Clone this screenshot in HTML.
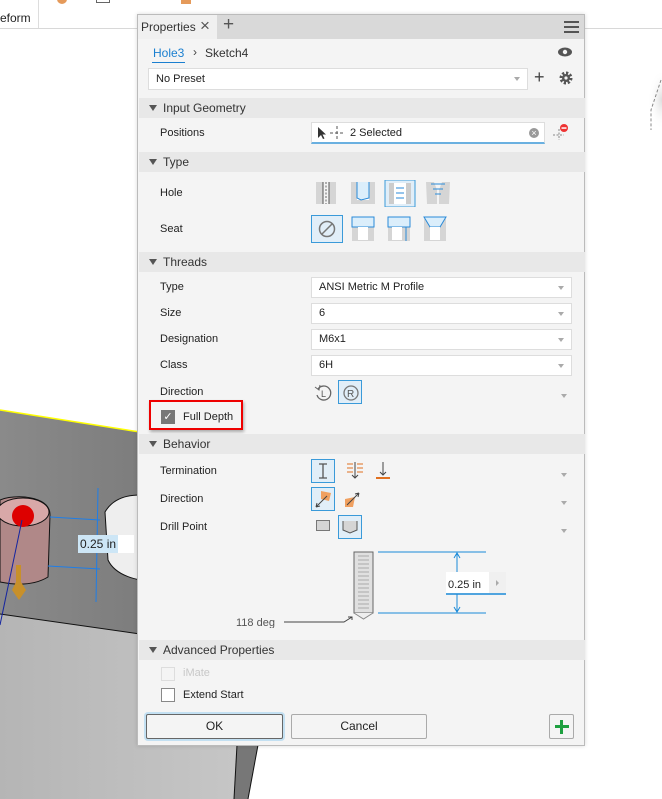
<!DOCTYPE html>
<html><head><meta charset="utf-8"><style>
*{margin:0;padding:0;box-sizing:border-box}
body{width:662px;height:799px;position:relative;overflow:hidden;background:#fff;font-family:"Liberation Sans",Tahoma,sans-serif;font-size:11px;color:#222}
.a{position:absolute}
.hdr{position:absolute;left:1px;width:446px;height:20px;background:#e8e8e8;font-size:12px;color:#333;padding-left:24px;line-height:20px}
.hdr:before{content:"";position:absolute;left:10px;top:7px;border-left:4px solid transparent;border-right:4px solid transparent;border-top:6px solid #555}
.lbl{position:absolute;left:22px;font-size:11px;color:#222}
.dd{position:absolute;left:173px;width:261px;height:21px;background:#fff;border:1px solid #ddd;padding-left:7px;line-height:19px;font-size:11px}
.dd:after,.arr:after{content:"";position:absolute;right:7px;top:8px;border-left:3.5px solid transparent;border-right:3.5px solid transparent;border-top:4px solid #aaa}
.arr{position:absolute;width:16px;height:16px}
.ib{position:absolute;width:24px;height:24px}
.sel{border:1px solid #3a9ad9;background:#e1eef8}
.cb{position:absolute;width:14px;height:14px;border:1px solid #888;background:#fff}
</style></head><body>
<div class="a" style="left:0;top:0;width:662px;height:29px;background:#fff;border-bottom:1px solid #d8d8d8"></div>
<div class="a" style="left:0;top:11px;font-size:12px">eform</div>
<div class="a" style="left:38px;top:0;width:1px;height:28px;background:#ddd"></div>
<div class="a" style="left:57px;top:-6px;width:10px;height:10px;border-radius:50%;background:#e59a5a"></div>
<div class="a" style="left:181px;top:-6px;width:10px;height:10px;background:#e59a5a"></div>
<div class="a" style="left:96px;top:-2px;width:14px;height:5px;border:1px solid #666"></div>
<svg class="a" style="left:0;top:0" width="662" height="799">
<defs><linearGradient id="g1" x1="0" x2="1"><stop offset="0" stop-color="#8a8a8a"/><stop offset="1" stop-color="#7d7d7d"/></linearGradient>
<linearGradient id="g2" x1="0" x2="1"><stop offset="0" stop-color="#b5b5b5"/><stop offset="1" stop-color="#c6c6c6"/></linearGradient>
<radialGradient id="g3"><stop offset="0" stop-color="#ddd"/><stop offset="1" stop-color="#fff" stop-opacity="0"/></radialGradient></defs>
<polygon points="0,410 140,432 140,634 0,614" fill="url(#g1)"/>
<line x1="0" y1="410" x2="140" y2="432" stroke="#ffff00" stroke-width="1.5"/>
<polygon points="0,614 140,634 140,746 237,746 234,799 0,799" fill="url(#g2)"/>
<line x1="0" y1="614" x2="140" y2="634" stroke="#111" stroke-width="1"/>
<polygon points="237,745 258,745 248,799 234,799" fill="#777"/>
<line x1="237" y1="745" x2="234" y2="799" stroke="#111"/><line x1="258" y1="745" x2="248" y2="799" stroke="#111"/>
<path d="M0,500 Q10,496 25,497 Q50,500 50,515 L48,577 Q30,588 0,582 Z" fill="#b08888" stroke="#111"/>
<ellipse cx="23" cy="512" rx="26" ry="14" fill="#d8a8a8" stroke="#111"/>
<circle cx="23" cy="516" r="11" fill="#d00"/>
<path d="M105,512 Q115,495 140,495 L140,580 Q115,575 108,560 Z" fill="#eee" stroke="#111"/>
<line x1="22" y1="520" x2="0" y2="625" stroke="#1525a0"/>
<line x1="50" y1="517" x2="100" y2="520" stroke="#1e7ee8"/><line x1="48" y1="566" x2="100" y2="569" stroke="#1e7ee8"/>
<line x1="98" y1="488" x2="96" y2="602" stroke="#1e7ee8"/>
<polygon points="16,565 21,565 21,582 26,590 19,600 12,590 16,582" fill="#c8902a"/>
<rect x="78" y="535" width="56" height="18" fill="#fff"/>
<rect x="78" y="535" width="40" height="18" fill="#cde6f6"/>
<text x="80" y="548" font-family="Liberation Sans" font-size="12" fill="#222">0.25 in</text>
<ellipse cx="662" cy="100" rx="14" ry="30" fill="url(#g3)"/>
<path d="M661,80 L655,98 L651,110 L651,130" stroke="#888" stroke-dasharray="3,2" fill="none"/>
</svg>
<div class="a" style="left:137px;top:14px;width:448px;height:732px;background:#f4f4f4;border:1px solid #bbb;box-shadow:0 0 4px rgba(0,0,0,.15)">
<div class="a" style="left:0;top:0;width:446px;height:24px;background:#d9d9d9"></div>
<div class="a" style="left:0;top:0;width:79px;height:24px;background:#f0f0f0"></div>
<div class="a" style="left:3px;top:5px;font-size:12px;color:#333">Properties</div>
<div class="a" style="left:62px;top:1px;font-size:17px;color:#555">×</div>
<div class="a" style="left:85px;top:-1px;font-size:19px;color:#555">+</div>
<div class="a" style="left:426px;top:6px;width:15px;height:2px;background:#555;box-shadow:0 5px 0 #555,0 10px 0 #555"></div>
<div class="a" style="left:14px;top:31px;font-size:12px;color:#1a7fd0;border-bottom:1px solid #1a7fd0;padding:0 1px 2px">Hole3</div>
<div class="a" style="left:55px;top:30px;font-size:12px;color:#444">›</div>
<div class="a" style="left:67px;top:31px;font-size:12px;color:#333">Sketch4</div>
<svg class="a" style="left:420px;top:32px" width="14" height="10"><ellipse cx="7" cy="5" rx="7" ry="4.5" fill="#555"/><circle cx="7" cy="5" r="2.2" fill="#f4f4f4"/></svg>
<div class="dd" style="left:10px;top:53px;width:380px;height:22px;font-size:11px;line-height:20px">No Preset</div>
<div class="a" style="left:396px;top:52px;font-size:18px;color:#444">+</div>
<svg class="a" style="left:421px;top:56px" width="14" height="14"><circle cx="7" cy="7" r="5" fill="none" stroke="#555" stroke-width="3" stroke-dasharray="2.2,1.7"/><circle cx="7" cy="7" r="4" fill="#555"/><circle cx="7" cy="7" r="1.6" fill="#f4f4f4"/></svg>

<div class="hdr" style="top:83px">Input Geometry</div>
<div class="lbl" style="top:112px">Positions</div>
<div class="a" style="left:173px;top:107px;width:234px;height:22px;background:#fff;border:1px solid #ddd;border-bottom:2px solid #6ab0e0"></div>
<svg class="a" style="left:177px;top:110px" width="36" height="16"><path d="M3,2 L3,13 L6,10 L8,14 L9.5,13.5 L7.5,9.5 L11,9.5 Z" fill="#333"/><path d="M15,8 H30 M22,1 V15" stroke="#555" stroke-dasharray="3,2"/></svg>
<div class="a" style="left:212px;top:112px;font-size:11px">2 Selected</div>
<div class="a" style="left:391px;top:113px;width:10px;height:10px;border-radius:50%;background:#999;color:#fff;font-size:9px;line-height:10px;text-align:center">×</div>
<svg class="a" style="left:414px;top:108px" width="18" height="18"><path d="M1,12 H12 M7,6 V17" stroke="#888" stroke-dasharray="2,1.5"/><circle cx="12" cy="5" r="4" fill="#e33"/><rect x="9.5" y="4.3" width="5" height="1.5" fill="#fff"/></svg>

<div class="hdr" style="top:137px">Type</div>
<div class="lbl" style="top:172px">Hole</div>
<div class="lbl" style="top:208px">Seat</div>
<svg class="a" style="left:175px;top:165px" width="150" height="27">
<rect x="3" y="2" width="7" height="22" fill="#d5d5d5"/><rect x="16" y="2" width="7" height="22" fill="#d5d5d5"/><line x1="13" y1="2" x2="13" y2="24" stroke="#666" stroke-dasharray="2,1.5"/><line x1="10" y1="2" x2="10" y2="24" stroke="#555"/><line x1="16" y1="2" x2="16" y2="24" stroke="#555"/>
<rect x="38" y="2" width="24" height="22" fill="#d5d5d5"/><rect x="44" y="2" width="12" height="18" fill="#fff"/><path d="M44,2 V18 L48,20 L56,18 V2" stroke="#2a8ad8" fill="#dbeefb"/>
<rect x="72" y="0" width="30" height="27" fill="#e1eef8" stroke="#3a9ad9"/><rect x="76" y="3" width="22" height="21" fill="#ccc"/><rect x="81" y="3" width="12" height="21" fill="#fff"/><path d="M83,8 H91 M83,13 H91 M83,18 H91" stroke="#2a8ad8"/>
<path d="M113,2 H121 L124,10 V24 H114 Z" fill="#d5d5d5"/><path d="M137,2 H129 L126,10 V24 H136 Z" fill="#d5d5d5"/><path d="M118,4 H132 M120,9 H130 M122,14 H128" stroke="#2a8ad8"/>
</svg>
<div class="ib sel" style="left:173px;top:200px;width:32px;height:28px"></div>
<svg class="a" style="left:180px;top:205px" width="18" height="18"><circle cx="9" cy="9" r="7.5" fill="none" stroke="#777" stroke-width="1.5"/><line x1="4" y1="14" x2="14" y2="4" stroke="#777" stroke-width="1.5"/></svg>
<svg class="a" style="left:212px;top:200px" width="130" height="28">
<rect x="2" y="4" width="22" height="22" fill="#d5d5d5"/><rect x="2" y="2" width="22" height="10" fill="#dbeefb" stroke="#2a8ad8"/><rect x="8" y="12" width="10" height="13" fill="#fff"/>
<rect x="38" y="4" width="22" height="22" fill="#d5d5d5"/><rect x="38" y="2" width="22" height="10" fill="#dbeefb" stroke="#2a8ad8"/><rect x="42" y="12" width="10" height="13" fill="#fff"/><line x1="56" y1="12" x2="56" y2="26" stroke="#2a8ad8"/>
<rect x="74" y="4" width="22" height="22" fill="#d5d5d5"/><path d="M74,2 H96 L90,12 H80 Z" fill="#dbeefb" stroke="#2a8ad8"/><rect x="80" y="12" width="10" height="13" fill="#fff"/>
</svg>

<div class="hdr" style="top:237px">Threads</div>
<div class="lbl" style="top:266px">Type</div>
<div class="dd" style="top:262px">ANSI Metric M Profile</div>
<div class="lbl" style="top:292px">Size</div>
<div class="dd" style="top:288px">6</div>
<div class="lbl" style="top:318px">Designation</div>
<div class="dd" style="top:314px">M6x1</div>
<div class="lbl" style="top:344px">Class</div>
<div class="dd" style="top:340px">6H</div>
<div class="lbl" style="top:371px">Direction</div>
<svg class="a" style="left:176px;top:368px" width="20" height="20"><path d="M4,6 A7,7 0 1 1 3,12" fill="none" stroke="#666" stroke-width="1.3"/><path d="M1,4 L5,7 L6,2" fill="none" stroke="#666"/><text x="7" y="14" font-size="9" font-family="Liberation Sans" fill="#555">L</text></svg>
<div class="ib sel" style="left:200px;top:365px;width:24px;height:24px"></div>
<svg class="a" style="left:203px;top:368px" width="20" height="20"><circle cx="10" cy="10" r="7" fill="none" stroke="#777" stroke-width="1.3"/><text x="6" y="14" font-size="10" font-family="Liberation Sans" fill="#555">R</text></svg>
<div class="arr" style="left:420px;top:371px"></div>
<div class="a" style="left:11px;top:385px;width:94px;height:30px;border:2px solid #e00;box-shadow:1px 2px 3px rgba(0,0,0,.3)"></div>
<div class="a" style="left:23px;top:395px;width:14px;height:14px;background:#777;color:#fff;font-size:11px;line-height:14px;text-align:center">✓</div>
<div class="a" style="left:45px;top:396px;font-size:11px">Full Depth</div>

<div class="hdr" style="top:419px">Behavior</div>
<div class="lbl" style="top:450px">Termination</div>
<div class="ib sel" style="left:173px;top:444px"></div>
<svg class="a" style="left:173px;top:444px" width="90" height="80">
<path d="M8,5 H16 M12,5 V19 M8,19 H16" stroke="#555" stroke-width="1.3"/>
<path d="M36,5 H42 M36,9 H42 M36,13 H42 M46,5 H52 M46,9 H52 M46,13 H52" stroke="#e07020"/><path d="M44,3 V19 M41,16 L44,19 L47,16" stroke="#444" fill="none"/>
<path d="M72,3 V16 M69,13 L72,16 L75,13" stroke="#444" fill="none"/><rect x="65" y="18" width="14" height="2" fill="#e07020"/>
</svg>
<div class="arr" style="left:420px;top:450px"></div>
<div class="lbl" style="top:478px">Direction</div>
<div class="ib sel" style="left:173px;top:472px"></div>
<svg class="a" style="left:173px;top:472px" width="60" height="26">
<path d="M10,4 L20,6 L18,14 L10,12 Z" fill="#f0a060"/><path d="M5,20 L16,9 M5,20 L6,16 M5,20 L9,19" stroke="#444" fill="none"/>
<path d="M34,12 L44,10 L42,20 L34,20 Z" fill="#f0a060"/><path d="M36,18 L48,6 M48,6 L44,7 M48,6 L47,10" stroke="#444" fill="none"/>
</svg>
<div class="arr" style="left:420px;top:478px"></div>
<div class="lbl" style="top:506px">Drill Point</div>
<div class="a" style="left:178px;top:505px;width:14px;height:11px;background:#d5d5d5;border:1px solid #777"></div>
<div class="ib sel" style="left:200px;top:500px"></div>
<svg class="a" style="left:204px;top:504px" width="16" height="16"><path d="M1,2 V11 L8,14 L15,11 V2" fill="#d5d5d5" stroke="#555"/></svg>
<div class="arr" style="left:420px;top:506px"></div>
<svg class="a" style="left:90px;top:533px" width="280" height="80">
<rect x="126" y="4" width="19" height="61" fill="#e0e0e0" stroke="#666"/>
<path d="M130,8H141M130,12H141M130,16H141M130,20H141M130,24H141M130,28H141M130,32H141M130,36H141M130,40H141M130,44H141M130,48H141M130,52H141M130,56H141M130,60H141" stroke="#aaa"/>
<path d="M126,65 L135.5,71 L145,65" fill="#eee" stroke="#888"/>
<path d="M56,74 H116 L124,69 M120,69 H124 V72" stroke="#444" fill="none"/>
<path d="M150,4 H258 M150,65 H258 M229,6 V63 M226,10 L229,5 L232,10 M226,59 L229,64 L232,59" stroke="#1a8ad8" fill="none"/>
<rect x="218" y="24" width="60" height="22" fill="#f0f0f0"/><rect x="218" y="24" width="43" height="21" fill="#fff"/><line x1="218" y1="46" x2="278" y2="46" stroke="#1a8ad8" stroke-width="1.5"/>
<text x="220" y="40" font-family="Liberation Sans" font-size="11" fill="#222">0.25 in</text>
<path d="M268,32 L271,35 L268,38 Z" fill="#aaa"/>
<text x="8" y="78" font-family="Liberation Sans" font-size="11" fill="#555">118 deg</text>
</svg>

<div class="hdr" style="top:625px">Advanced Properties</div>
<div class="cb" style="left:23px;top:652px;border-color:#ddd;background:#f4f4f4"></div>
<div class="a" style="left:45px;top:652px;color:#c8c8c8">iMate</div>
<div class="cb" style="left:23px;top:673px"></div>
<div class="a" style="left:45px;top:674px">Extend Start</div>
<div class="a" style="left:8px;top:699px;width:137px;height:25px;border:1px solid #666;border-radius:2px;background:#f4f4f4;box-shadow:0 0 0 2px #c3e0f2;text-align:center;line-height:23px;font-size:12px">OK</div>
<div class="a" style="left:153px;top:699px;width:136px;height:25px;border:1px solid #aaa;border-radius:2px;background:#f4f4f4;text-align:center;line-height:23px;font-size:12px">Cancel</div>
<div class="a" style="left:411px;top:699px;width:25px;height:25px;border:1px solid #aaa;border-radius:2px;background:#f4f4f4"></div>
<div class="a" style="left:417px;top:710px;width:14px;height:3px;background:#1ea040"></div>
<div class="a" style="left:422px;top:705px;width:3px;height:14px;background:#1ea040"></div>
</div>
</body></html>
